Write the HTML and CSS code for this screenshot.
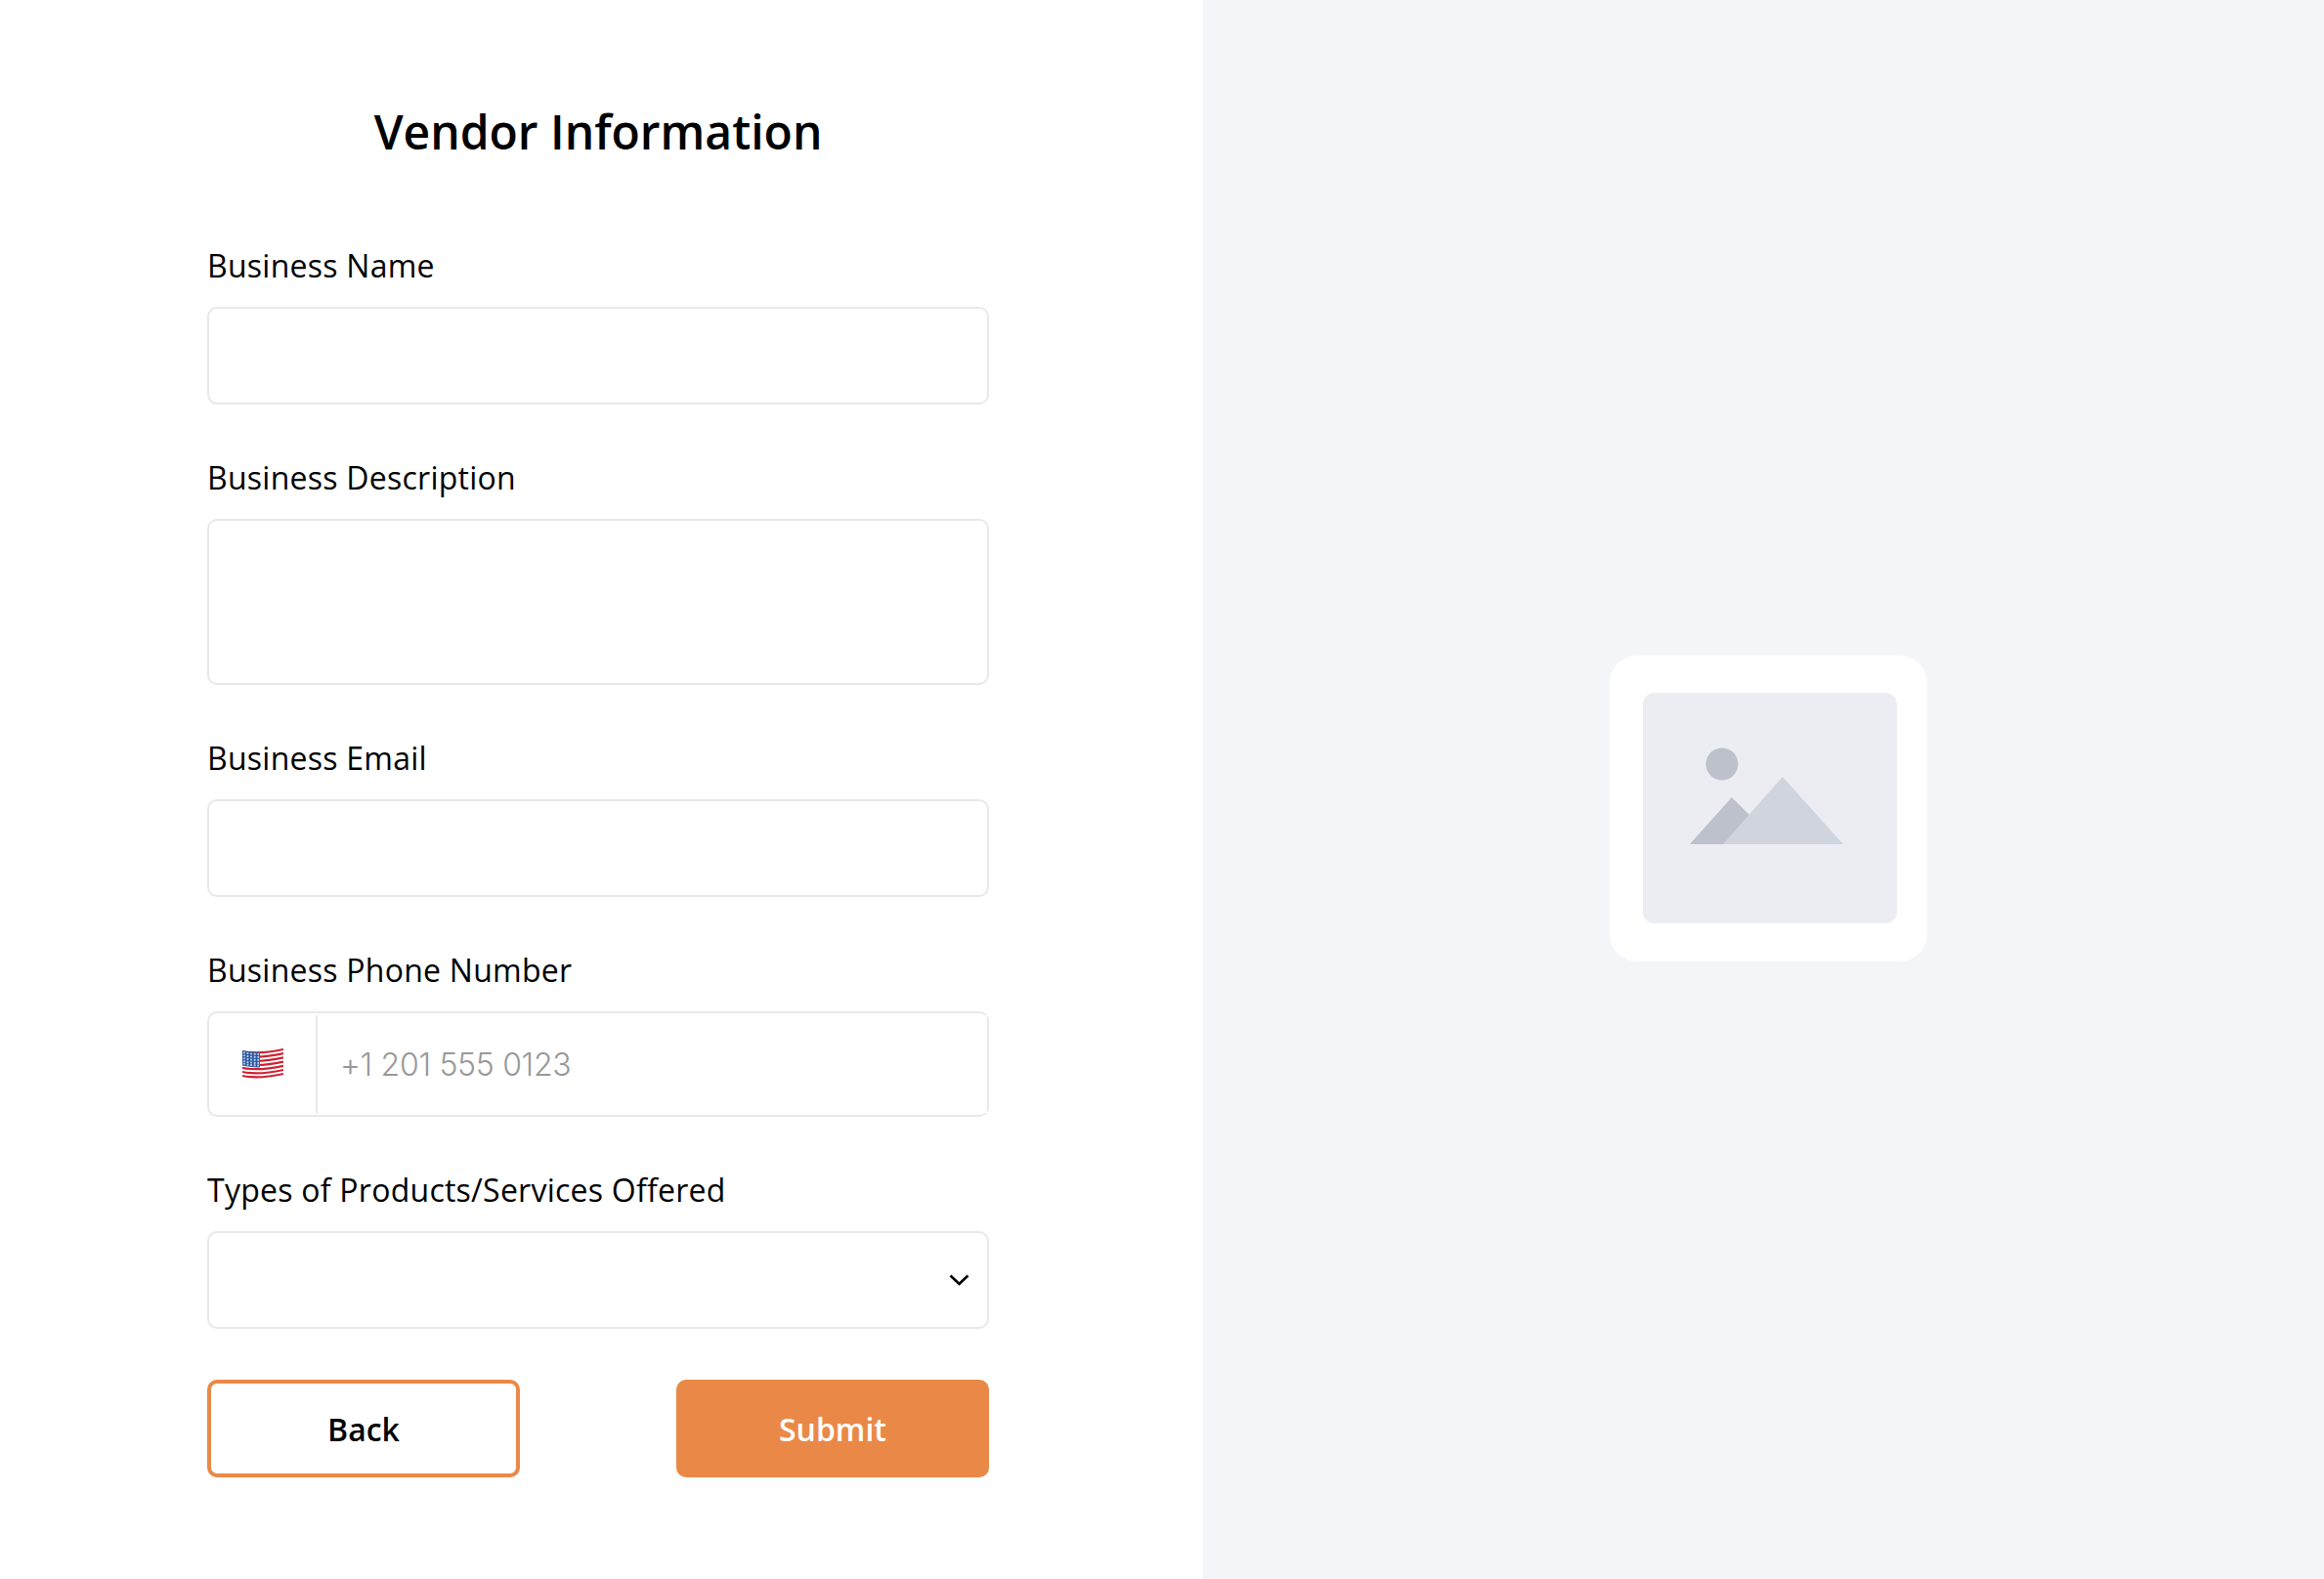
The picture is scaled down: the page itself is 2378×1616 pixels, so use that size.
FILE: index.html
```html
<!DOCTYPE html>
<html lang="en">
<head>
    <meta charset="UTF-8" />
    <title>Vendor Information</title>
    <link rel="stylesheet" href="styles.css">
</head>
<body>

<div class="form-panel">
    <form class="vendor-form">
        <h1 class="form-title">Vendor Information</h1>

        <div class="field">
            <label class="field-label" for="name">Business Name</label>
            <input class="text-input" id="name" type="text" />
        </div>

        <div class="field">
            <label class="field-label" for="description">Business Description</label>
            <textarea class="text-input text-area" id="description"></textarea>
        </div>

        <div class="field">
            <label class="field-label" for="email">Business Email</label>
            <input class="text-input" id="email" type="text" />
        </div>

        <div class="field">
            <label class="field-label" for="phone">Business Phone Number</label>
            <div class="phone-input">
                <div class="phone-flag">
                    <svg width="42" height="32" viewBox="0 0 42 32">
                        <defs>
                            <path id="wave" d="M0 2C14 5 28 3 42 0" fill="none" stroke="#cf2233" stroke-width="2.2"/>
                            <path id="dots" d="M1 2.500C7 4 13 4.500 18 4.500" fill="none" stroke="#c4d3ea" stroke-width="1.800" stroke-dasharray="1.800 1.800"/>
                        </defs>
                        <path d="M0 2C14 5 28 3 42 0V27C28 30 14 32 0 29Z" fill="#fff"/>
                        <use href="#wave" y="1"/>
                        <use href="#wave" y="5.200"/>
                        <use href="#wave" y="9.400"/>
                        <use href="#wave" y="13.600"/>
                        <use href="#wave" y="17.800"/>
                        <use href="#wave" y="22"/>
                        <use href="#wave" y="26"/>
                        <path d="M0 2C6 3.300 12 4 18 4.200V19.500C12 19.300 6 18.500 0 17.500Z" fill="#2a5aa4"/>
                        <use href="#dots" y="1.500"/>
                        <use href="#dots" y="4.500"/>
                        <use href="#dots" y="7.500"/>
                        <use href="#dots" y="10.500"/>
                        <use href="#dots" y="13"/>
                    </svg>
                </div>
                <input class="phone-number" id="phone" type="text" placeholder="+1 201 555 0123" />
            </div>
        </div>

        <div class="field">
            <label class="field-label" for="products">Types of Products/Services Offered</label>
            <div class="select-wrapper">
                <select class="text-input select-input" id="products">
                    <option></option>
                </select>
                <svg class="select-arrow" width="21" height="12" viewBox="0 0 21 12">
                    <path d="M1.500 1.500L10.500 10L19.500 1.500" fill="none" stroke="#000" stroke-width="2.600"/>
                </svg>
            </div>
        </div>

        <div class="form-buttons">
            <button class="btn btn-back" type="button">Back</button>
            <button class="btn btn-submit" type="submit">Submit</button>
        </div>
    </form>
</div>

<div class="preview-panel">
    <svg class="preview-icon" width="325" height="313" viewBox="0 0 325 313">
        <rect width="325" height="313" rx="28" fill="#fff"/>
        <rect x="34" y="38" width="260" height="236" rx="12" fill="#ecedf2"/>
        <circle cx="115" cy="111" r="16.500" fill="#bdc1cc"/>
        <path d="M82 193L125 145L173 193Z" fill="#bdc1cc"/>
        <path d="M116 193L177 124L239 193Z" fill="#d0d4dc"/>
    </svg>
</div>

</body>
</html>
```

FILE: styles.css
```css
* {
    box-sizing: border-box;
}

body {
    margin: 0;
    height: 1616px;
    display: flex;
    font-family: "Open Sans", sans-serif;
    color: #000;
    background-color: #fff;
    overflow: hidden;
}

.form-panel {
    width: 1231px;
    padding: 0 0 0 212px;
}

.vendor-form {
    width: 800px;
}

.form-title {
    margin: 0;
    padding-top: 101px;
    height: 250px;
    font-size: 48px;
    line-height: 68px;
    font-weight: 600;
    text-align: center;
}

.field {
    margin-bottom: 53px;
}

.field:nth-child(6) {
    margin-bottom: 52px;
}

.field-label {
    display: block;
    margin-bottom: 20px;
    font-size: 32px;
    line-height: 44px;
    font-weight: 500;
    letter-spacing: 0.25px;
}

.text-input {
    display: block;
    width: 100%;
    height: 100px;
    border: 2px solid #e8e8e8;
    border-radius: 10px;
    background-color: #fff;
    outline: none;
}

.text-area {
    height: 170px;
    resize: none;
}

.phone-input {
    display: flex;
    height: 108px;
    padding: 2px 0;
    border: 2px solid #e8e8e8;
    border-radius: 10px;
}

.phone-flag {
    width: 111px;
    border-right: 2px solid #e8e8e8;
    display: flex;
    justify-content: center;
    align-items: center;
}

.phone-number {
    flex: 1;
    min-width: 0;
    padding: 0 0 0 23px;
    border: none;
    outline: none;
    font-family: Inter, sans-serif;
    font-size: 32px;
    font-weight: 300;
    letter-spacing: -0.3px;
    color: #000;
}

.phone-number::placeholder {
    color: #999;
    opacity: 1;
}

.select-wrapper {
    position: relative;
}

.select-input {
    appearance: none;
}

.select-arrow {
    position: absolute;
    top: 44px;
    right: 20px;
}

.form-buttons {
    display: flex;
    justify-content: space-between;
}

.btn {
    width: 320px;
    height: 100px;
    border-radius: 10px;
    font-family: "Open Sans", sans-serif;
    font-size: 32px;
    font-weight: 600;
}

.btn-back {
    border: 4px solid #ea8947;
    background-color: #fff;
    color: #000;
}

.btn-submit {
    border: none;
    background-color: #ea8947;
    color: #fff;
}

.preview-panel {
    flex: 1;
    display: flex;
    justify-content: center;
    align-items: center;
    padding: 38px 0 0 10px;
    background-color: #f4f5f9;
}

.preview-icon {
    filter: blur(0.5px);
}
```
